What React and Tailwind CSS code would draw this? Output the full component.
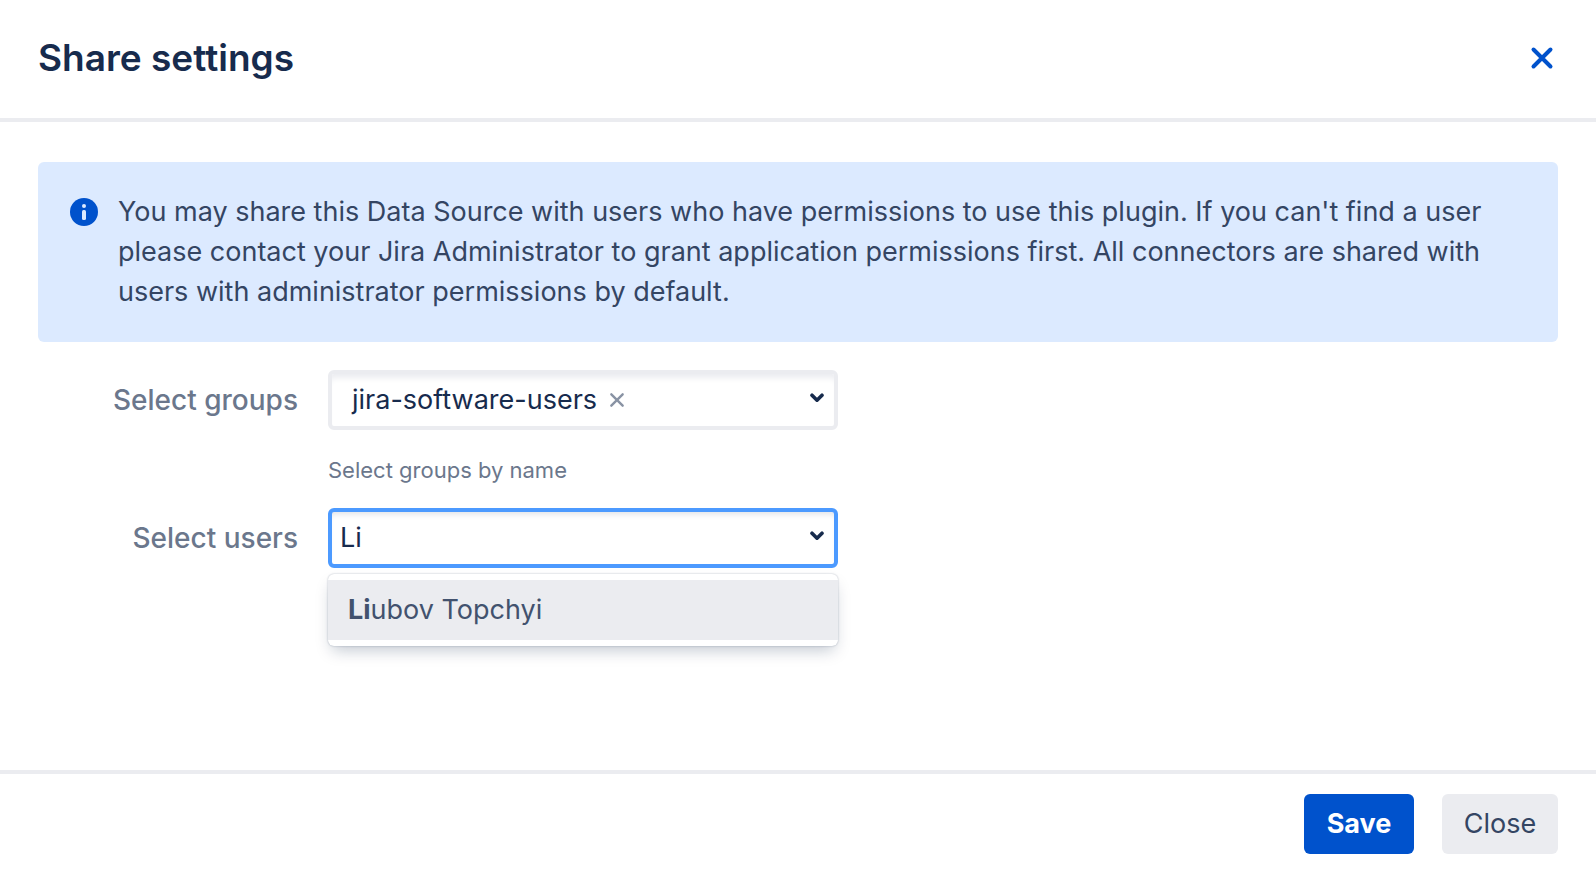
import React, { useState } from "react";

const USERS = ["Liubov Topchyi"];

function InfoIcon() {
  return (
    <svg viewBox="0 0 28 28" className="w-7 h-7 shrink-0" aria-hidden="true">
      <circle cx="14" cy="14" r="14" fill="#0052cc" />
      <circle cx="14" cy="8" r="2" fill="#dceaff" />
      <rect x="12" y="12" width="4" height="10" rx="1.5" fill="#dceaff" />
    </svg>
  );
}

function CrossIcon({ className, strokeWidth }) {
  return (
    <svg
      viewBox="0 0 24 24"
      className={className}
      fill="none"
      stroke="currentColor"
      strokeWidth={strokeWidth}
      strokeLinecap="round"
      aria-hidden="true"
    >
      <path d="M3.5 3.5l17 17M20.5 3.5l-17 17" />
    </svg>
  );
}

function ChevronIcon() {
  return (
    <svg
      viewBox="0 0 14 10"
      className="w-3.5 h-2.5"
      fill="none"
      stroke="currentColor"
      strokeWidth="3.6"
      strokeLinecap="round"
      strokeLinejoin="round"
      aria-hidden="true"
    >
      <path d="M2 2.2l5 5l5 -5" />
    </svg>
  );
}

function FormRow({ label, htmlFor, children }) {
  return (
    <div className="flex items-start gap-[30px]">
      <label
        htmlFor={htmlFor}
        className="w-[260px] shrink-0 text-right text-[28px] leading-[60px] font-medium text-[#6b778c]"
      >
        {label}
      </label>
      <div className="w-full max-w-[510px]">{children}</div>
    </div>
  );
}

export default function App() {
  const [groups, setGroups] = useState(["jira-software-users"]);
  const [query, setQuery] = useState("Li");

  const matches = USERS.filter(
    (name) => query && name.toLowerCase().startsWith(query.toLowerCase())
  );

  return (
    <div
      role="dialog"
      aria-labelledby="share-title"
      className="min-h-screen flex flex-col bg-white font-['Inter',sans-serif] text-[27px] text-[#172b4d]"
    >
      {/* Header */}
      <header className="flex items-center justify-between pl-[38px] pr-10 pb-0.5 h-[122px] border-b-4 border-[#ebecf0]">
        <h1 id="share-title" className="text-[37px] leading-[48px] font-semibold">
          Share settings
        </h1>
        <button type="button" aria-label="Close dialog" className="p-0.5 text-[#0052cc]">
          <CrossIcon className="w-6 h-6" strokeWidth="4" />
        </button>
      </header>

      {/* Body */}
      <main className="flex-1 px-[38px] pt-10 pb-10">
        <div className="flex items-start gap-5 rounded-md bg-[#dceaff] pl-8 pr-10 py-[30px] text-[#344563]">
          <div className="flex items-center h-10">
            <InfoIcon />
          </div>
          <p className="leading-10">
            You may share this Data Source with users who have permissions to use this plugin. If
            you can't find a user please contact your Jira Administrator to grant application
            permissions first. All connectors are shared with users with administrator permissions
            by default.
          </p>
        </div>

        <form className="flex flex-col gap-[18px] mt-7">
          <FormRow label="Select groups" htmlFor="groups">
            <div className="flex items-center h-[60px] rounded-md border-4 border-[#ebecf0] pl-5 pr-2.5 shadow-[inset_0_8px_6px_-4px_#ebecf0]">
              {groups.map((group) => (
                <span key={group} className="flex items-center gap-3">
                  {group}
                  <button
                    type="button"
                    aria-label={`Remove ${group}`}
                    onClick={() => setGroups(groups.filter((g) => g !== group))}
                    className="text-[#8993a4]"
                  >
                    <CrossIcon className="w-4 h-4" strokeWidth="3.6" />
                  </button>
                </span>
              ))}
              <input id="groups" type="text" className="flex-1 min-w-0 ml-2 outline-none" />
              <button type="button" aria-label="Show groups" className="pb-1">
                <ChevronIcon />
              </button>
            </div>
            <p className="mt-5 text-[22px] leading-10 text-[#6b778c]">Select groups by name</p>
          </FormRow>

          <FormRow label="Select users" htmlFor="users">
            <div className="relative">
              <div className="flex items-center h-[60px] rounded-md border-4 border-[#4c9aff] pl-2 pr-2.5 shadow-[inset_0_6px_6px_-4px_#dfe1e6]">
                <input
                  id="users"
                  type="text"
                  role="combobox"
                  aria-expanded={matches.length > 0}
                  aria-controls="users-list"
                  value={query}
                  onChange={(e) => setQuery(e.target.value)}
                  className="flex-1 min-w-0 outline-none"
                />
                <button type="button" aria-label="Show users" className="pb-1">
                  <ChevronIcon />
                </button>
              </div>
              {matches.length > 0 && (
                <ul
                  id="users-list"
                  role="listbox"
                  className="absolute top-full inset-x-0 mt-1.5 py-1.5 rounded-md bg-white shadow-[0_8px_16px_-4px_rgba(9,30,66,0.25),0_0_2px_rgba(9,30,66,0.31)]"
                >
                  {matches.map((name) => (
                    <li
                      key={name}
                      role="option"
                      aria-selected="true"
                      className="px-5 leading-[60px] bg-[#ebecf0] text-[#42526e]"
                    >
                      <b className="font-bold">{name.slice(0, query.length)}</b>
                      {name.slice(query.length)}
                    </li>
                  ))}
                </ul>
              )}
            </div>
          </FormRow>
        </form>
      </main>

      {/* Footer */}
      <footer className="flex justify-end gap-7 px-[38px] pt-5 pb-[18px] border-t-4 border-[#ebecf0]">
        <button type="button" className="h-[60px] w-[110px] rounded-md bg-[#0052cc] font-bold text-white">
          Save
        </button>
        <button type="button" className="h-[60px] w-[116px] rounded-md bg-[#ebecf0] text-[#344563]">
          Close
        </button>
      </footer>
    </div>
  );
}
